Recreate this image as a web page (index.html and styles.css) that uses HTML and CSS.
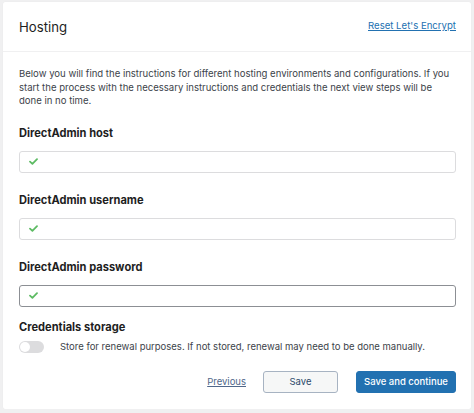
FILE: index.html
```html
<!DOCTYPE html>
<html lang="en">
<head>
<meta charset="utf-8">
<title>Hosting</title>
<link rel="stylesheet" href="styles.css">
</head>
<body>
<div class="card">
  <div class="card-header">
    <h2 class="title">Hosting</h2>
    <a class="reset-link" href="#">Reset Let's Encrypt</a>
  </div>
  <div class="card-body">
    <p class="intro">Below you will find the instructions for different hosting environments and configurations. If you start the process with the necessary instructions and credentials the next view steps will be done in no time.</p>

    <div class="field">
      <label class="label">DirectAdmin host</label>
      <div class="input">
        <svg class="check" width="9" height="7" viewBox="0 0 9 7"><path d="M1 3.6 L3.4 5.8 L8 1.2" fill="none" stroke="#5dbb63" stroke-width="1.8" stroke-linecap="round" stroke-linejoin="round"/></svg>
      </div>
    </div>

    <div class="field">
      <label class="label">DirectAdmin username</label>
      <div class="input">
        <svg class="check" width="9" height="7" viewBox="0 0 9 7"><path d="M1 3.6 L3.4 5.8 L8 1.2" fill="none" stroke="#5dbb63" stroke-width="1.8" stroke-linecap="round" stroke-linejoin="round"/></svg>
      </div>
    </div>

    <div class="field field-last">
      <label class="label">DirectAdmin password</label>
      <div class="input input-dark">
        <svg class="check" width="9" height="7" viewBox="0 0 9 7"><path d="M1 3.6 L3.4 5.8 L8 1.2" fill="none" stroke="#5dbb63" stroke-width="1.8" stroke-linecap="round" stroke-linejoin="round"/></svg>
      </div>
    </div>

    <div class="storage">
      <div class="label">Credentials storage</div>
      <div class="toggle-row">
        <span class="toggle"><span class="knob"></span></span>
        <span class="toggle-text">Store for renewal purposes. If not stored, renewal may need to be done manually.</span>
      </div>
    </div>

    <div class="actions">
      <a class="prev-link" href="#">Previous</a>
      <button class="btn btn-secondary">Save</button>
      <button class="btn btn-primary">Save and continue</button>
    </div>
  </div>
</div>
</body>
</html>
```
FILE: styles.css
```css
html, body {
  margin: 0;
  padding: 0;
}
body {
  background: #f0f0f1;
  font-family: Inter, "Noto Sans", "Liberation Sans", sans-serif;
  color: #2c3338;
}
.card {
  margin: 2px 3px 0 3px;
  width: 468px;
  height: 407px;
  background: #fff;
  border-radius: 2px;
  box-shadow: 0 0 1px rgba(0,0,0,0.08);
  box-sizing: border-box;
}
.card-header {
  height: 50px;
  box-sizing: border-box;
  border-bottom: 1px solid #f0f0f1;
  display: flex;
  align-items: center;
  justify-content: space-between;
  padding: 0 15px 0 16px;
}
.title {
  margin: 0;
  font-size: 13.2px;
  font-weight: 400;
  color: #1e1e1e;
}
.reset-link {
  font-size: 9.6px;
  color: #2271b1;
  text-decoration: underline;
  margin-top: -2px;
}
.card-body {
  padding: 15px 15px 15px 16px;
}
.intro {
  margin: 0 0 17px 0;
  max-width: 433px;
  font-size: 9.55px;
  line-height: 13.5px;
  color: #3c434a;
}
.field {
  margin-bottom: 19px;
}
.field-last {
  margin-bottom: 12px;
}
.label {
  display: block;
  font-size: 11.1px;
  font-weight: 700;
  line-height: 16px;
  color: #1e1e1e;
  margin-bottom: 10px;
}
.input {
  height: 22px;
  box-sizing: border-box;
  border: 1px solid #dcdcde;
  border-radius: 3px;
  display: flex;
  align-items: center;
  padding-left: 9px;
}
.input-dark {
  border-color: #8c8f94;
}
.check {
  display: block;
}
.storage .label {
  margin-bottom: 6px;
}
.toggle-row {
  display: flex;
  align-items: center;
  height: 12px;
}
.toggle {
  width: 25px;
  height: 12px;
  border-radius: 6px;
  background: #dcdcde;
  position: relative;
  flex: none;
}
.knob {
  position: absolute;
  left: 1px;
  top: 1px;
  width: 10px;
  height: 10px;
  border-radius: 50%;
  background: #fff;
}
.toggle-text {
  margin-left: 16px;
  font-size: 9.5px;
  color: #3c434a;
  white-space: nowrap;
}
.actions {
  margin-top: 18px;
  display: flex;
  justify-content: flex-end;
  align-items: center;
}
.prev-link {
  font-size: 9.5px;
  color: #50678a;
  text-decoration: underline;
  margin-right: 17px;
}
.btn {
  height: 22px;
  box-sizing: border-box;
  border-radius: 3px;
  font-family: inherit;
  font-size: 9.5px;
  padding: 0;
  cursor: pointer;
}
.btn-secondary {
  width: 75px;
  background: #f6f7f7;
  border: 1px solid #a7b3c2;
  color: #2c4a6b;
  margin-right: 18px;
}
.btn-primary {
  width: 100px;
  background: #2271b1;
  border: 1px solid #2271b1;
  color: #fff;
  font-weight: 500;
}
```
